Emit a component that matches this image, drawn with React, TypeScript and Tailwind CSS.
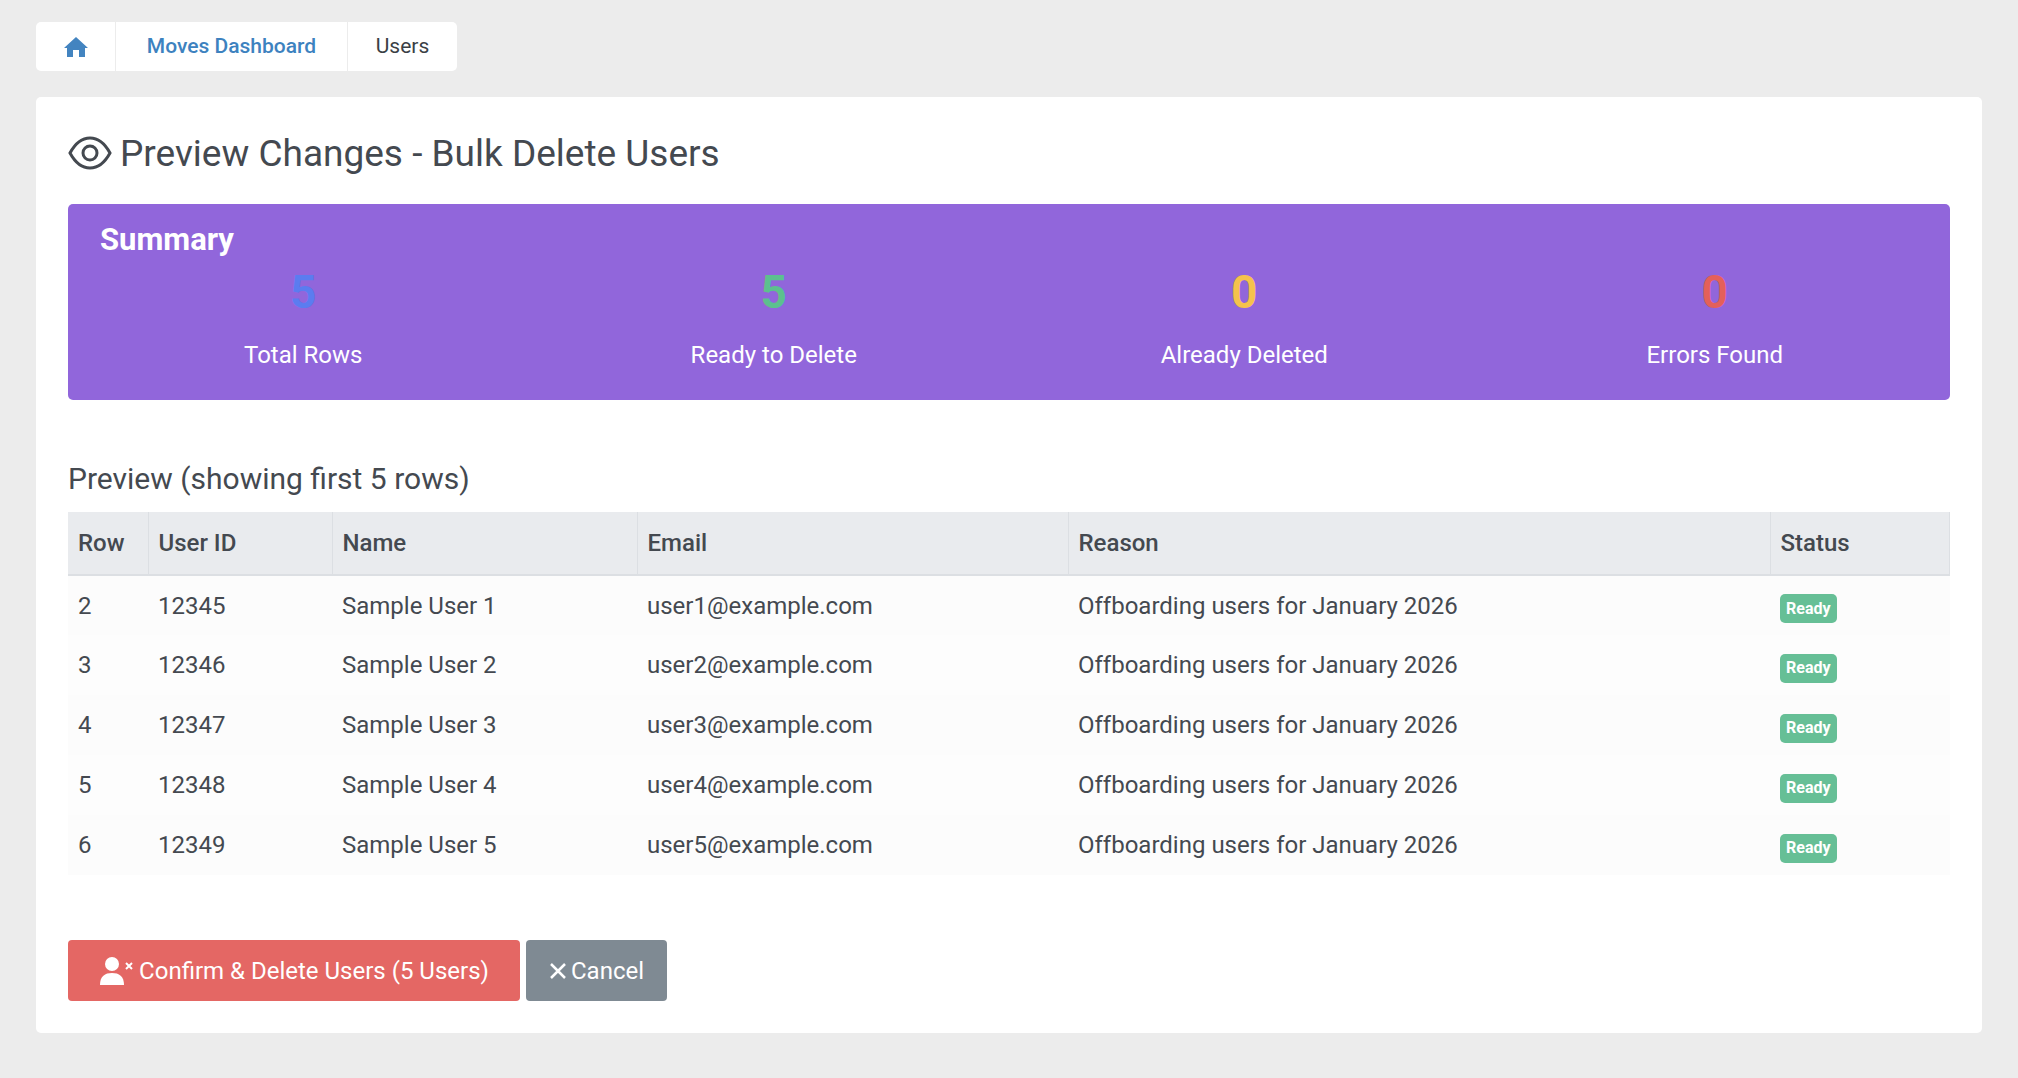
import React from "react";

const rows = [
  ["2", "12345", "Sample User 1", "user1@example.com"],
  ["3", "12346", "Sample User 2", "user2@example.com"],
  ["4", "12347", "Sample User 3", "user3@example.com"],
  ["5", "12348", "Sample User 4", "user4@example.com"],
  ["6", "12349", "Sample User 5", "user5@example.com"],
];

export default function App() {
  return (
    <div className="min-h-[1078px] bg-[#ececec] px-[36px] pt-[22px] text-[#444950]" style={{ fontFamily: "Roboto, 'Liberation Sans', sans-serif" }}>
      <div className="inline-flex h-[49px] bg-white rounded-[5px] text-[21px]">
        <div className="w-[80px] flex items-center justify-center border-r border-[#ececec]">
          <svg width="26" height="24" viewBox="0 0 26 24"><path d="M13 2 L25 13 L22 13 L22 22 L16 22 L16 15 L10 15 L10 22 L4 22 L4 13 L1 13 Z" fill="#4384c0" /></svg>
        </div>
        <div className="w-[232px] flex items-center justify-center border-r border-[#ececec] text-[#3d82bf] font-medium">Moves Dashboard</div>
        <div className="w-[109px] flex items-center justify-center text-[#3a3f45]">Users</div>
      </div>
      <div className="mt-[26px] bg-white rounded-[5px] px-[32px] pt-[30px] pb-[32px]">
        <div className="flex items-center gap-[8px] h-[52px]">
          <svg width="44" height="34" viewBox="0 0 44 34" fill="none" stroke="#444950" strokeWidth="3"><path d="M2 17 C8 6 15 2 22 2 C29 2 36 6 42 17 C36 28 29 32 22 32 C15 32 8 28 2 17 Z" /><circle cx="22" cy="17" r="7" /></svg>
          <h1 className="text-[37px] leading-none">Preview Changes - Bulk Delete Users</h1>
        </div>
        <div className="mt-[25px] bg-[#9166db] rounded-[5px] h-[196px] px-[32px] pt-[20px] text-white">
          <div className="text-[31px] font-bold leading-none">Summary</div>
          <div className="grid grid-cols-4 -mx-[32px] mt-[14px]">
            {[
              ["5", "text-[#5b7cf0]", "Total Rows"],
              ["5", "text-[#5cc08f]", "Ready to Delete"],
              ["0", "text-[#f5c24c]", "Already Deleted"],
              ["0", "text-[#e4605a]", "Errors Found"],
            ].map(([n, c, l]) => (
              <div key={l} className="flex flex-col items-center">
                <div className={`text-[46px] font-bold leading-none ${c}`}>{n}</div>
                <div className="text-[24px] mt-[22px]">{l}</div>
              </div>
            ))}
          </div>
        </div>
        <h2 className="mt-[64px] text-[30px] leading-none">Preview (showing first 5 rows)</h2>
        <table className="mt-[18px] w-full text-[24px] border-collapse">
          <thead>
            <tr className="bg-[#e9ebee] h-[63px] border-b-2 border-[#dcdfe3] font-medium">
              <th className="w-[80px] text-left font-medium px-[10px]">Row</th>
              <th className="w-[184px] text-left font-medium px-[10px] border-l border-[#dcdfe3]">User ID</th>
              <th className="w-[305px] text-left font-medium px-[10px] border-l border-[#dcdfe3]">Name</th>
              <th className="w-[431px] text-left font-medium px-[10px] border-l border-[#dcdfe3]">Email</th>
              <th className="w-[702px] text-left font-medium px-[10px] border-l border-[#dcdfe3]">Reason</th>
              <th className="text-left font-medium px-[10px] border-l border-r border-[#dcdfe3]">Status</th>
            </tr>
          </thead>
          <tbody>
            {rows.map((r, i) => (
              <tr key={r[0]} className={`h-[60px] ${i % 2 === 0 ? "bg-[#fcfcfc]" : "bg-[#fdfdfd]"}`}>
                <td className="px-[10px]">{r[0]}</td>
                <td className="px-[10px]">{r[1]}</td>
                <td className="px-[10px]">{r[2]}</td>
                <td className="px-[10px]">{r[3]}</td>
                <td className="px-[10px]">Offboarding users for January 2026</td>
                <td className="px-[10px]">
                  <span className="inline-flex items-center px-[6px] h-[29px] rounded-[5px] bg-[#66bf96] text-white text-[16px] font-bold">Ready</span>
                </td>
              </tr>
            ))}
          </tbody>
        </table>
        <div className="mt-[65px] flex gap-[6px]">
          <button className="h-[61px] w-[452px] rounded-[4px] bg-[#e46764] text-white text-[24px] flex items-center justify-center gap-[4px]">
            <svg width="36" height="30" viewBox="0 0 36 30" fill="white"><circle cx="13" cy="8" r="7" /><path d="M1 29 C1 20 6 17 13 17 C20 17 25 20 25 29 Z" /><path d="M27 7 L33 13 M33 7 L27 13" stroke="white" strokeWidth="2" /></svg>
            Confirm &amp; Delete Users (5 Users)
          </button>
          <button className="h-[61px] w-[141px] rounded-[4px] bg-[#7f8a93] text-white text-[24px] flex items-center justify-center gap-[4px]">
            <svg width="18" height="18" viewBox="0 0 18 18"><path d="M2 2 L16 16 M16 2 L2 16" stroke="white" strokeWidth="2.5" /></svg>
            Cancel
          </button>
        </div>
      </div>
    </div>
  );
}
